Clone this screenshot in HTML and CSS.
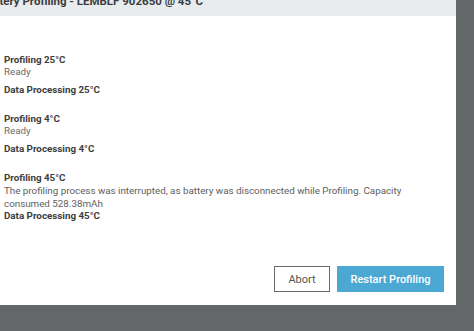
FILE: index.html
```html
<!DOCTYPE html>
<html>
<head>
<meta charset="utf-8">
<link rel="stylesheet" href="styles.css">
</head>
<body>
<div class="dialog">
  <div class="dialog-header">
    <h1 class="dialog-title">Battery Profiling - LEMBLF 902650 @ 45°C</h1>
  </div>
  <div class="dialog-body">
    <div class="step">
      <div class="step-title">Profiling 25°C</div>
      <div class="step-status">Ready</div>
      <div class="step-title">Data Processing 25°C</div>
    </div>
    <div class="step">
      <div class="step-title">Profiling 4°C</div>
      <div class="step-status">Ready</div>
      <div class="step-title">Data Processing 4°C</div>
    </div>
    <div class="step">
      <div class="step-title">Profiling 45°C</div>
      <div class="step-message">The profiling process was interrupted, as battery was disconnected while Profiling. Capacity consumed 528.38mAh</div>
      <div class="step-title">Data Processing 45°C</div>
    </div>
  </div>
  <div class="dialog-footer">
    <button class="btn btn-outline">Abort</button>
    <button class="btn btn-primary">Restart Profiling</button>
  </div>
</div>
</body>
</html>
```
FILE: styles.css
```css
html, body {
  margin: 0;
  padding: 0;
  background: #646768;
  height: 100%;
  overflow: hidden;
}

body {
  font-family: Roboto, "Liberation Sans", Arial, sans-serif;
}

.dialog {
  box-sizing: border-box;
  width: 468px;
  height: 313px;
  margin: -8px 0 0 -12px;
  background: #ffffff;
  display: flex;
  flex-direction: column;
}

.dialog-header {
  background: #e9ecee;
  height: 24px;
  overflow: hidden;
}

.dialog-title {
  margin: 0 0 0 -6px;
  font-size: 11.5px;
  line-height: 18px;
  font-weight: 700;
  color: #3a3d40;
  white-space: nowrap;
}

.dialog-body {
  flex: 1;
  padding: 38px 30px 0 16px;
  font-size: 9.8px;
  line-height: 12px;
}

.step {
  margin-bottom: 17px;
}

.step-title {
  font-weight: 700;
  color: #3d3d3d;
}

.step-status {
  color: #6a6a6a;
  margin-bottom: 6px;
}

.step-message {
  color: #5e5e5e;
  line-height: 13px;
  margin-bottom: 0;
}

.dialog-footer {
  display: flex;
  justify-content: flex-end;
  gap: 7px;
  padding: 0 12px 13px 16px;
}

.btn {
  font-family: Roboto, "Liberation Sans", Arial, sans-serif;
  font-size: 11px;
  height: 26px;
  box-sizing: border-box;
  border-radius: 0;
  cursor: pointer;
}

.btn-outline {
  width: 56px;
  background: #ffffff;
  color: #555555;
  border: 1px solid #6a6a6a;
}

.btn-primary {
  width: 107px;
  background: #4aa8d2;
  color: #ffffff;
  font-weight: 500;
  border: 1px solid #4aa8d2;
}
```
